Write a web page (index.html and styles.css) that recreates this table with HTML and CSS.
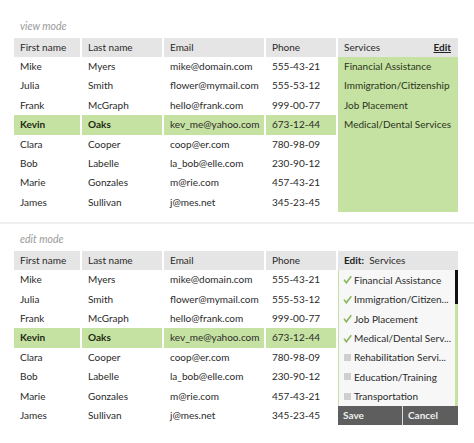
FILE: index.html
```html
<!DOCTYPE html>
<html>
<head>
<meta charset="utf-8">
<link rel="stylesheet" href="styles.css">
</head>
<body>
<div class="page">
  <section class="mode">
    <div class="mode-label">view mode</div>
    <div class="board">
      <div class="grid">
        <div class="row head"><div>First name</div><div>Last name</div><div>Email</div><div>Phone</div></div>
        <div class="row"><div>Mike</div><div>Myers</div><div>mike@domain.com</div><div>555-43-21</div></div>
        <div class="row"><div>Julia</div><div>Smith</div><div>flower@mymail.com</div><div>555-53-12</div></div>
        <div class="row"><div>Frank</div><div>McGraph</div><div>hello@frank.com</div><div>999-00-77</div></div>
        <div class="row sel"><div class="b">Kevin</div><div class="b">Oaks</div><div>kev_me@yahoo.com</div><div>673-12-44</div></div>
        <div class="row"><div>Clara</div><div>Cooper</div><div>coop@er.com</div><div>780-98-09</div></div>
        <div class="row"><div>Bob</div><div>Labelle</div><div>la_bob@elle.com</div><div>230-90-12</div></div>
        <div class="row"><div>Marie</div><div>Gonzales</div><div>m@rie.com</div><div>457-43-21</div></div>
        <div class="row"><div>James</div><div>Sullivan</div><div>j@mes.net</div><div>345-23-45</div></div>
      </div>
      <div class="services">
        <div class="svc-head"><span>Services</span><a class="edit-link">Edit</a></div>
        <div class="svc-view">
          <div class="svc-item">Financial Assistance</div>
          <div class="svc-item">Immigration/Citizenship</div>
          <div class="svc-item">Job Placement</div>
          <div class="svc-item">Medical/Dental Services</div>
        </div>
      </div>
    </div>
  </section>
  <div class="divider"></div>
  <section class="mode">
    <div class="mode-label">edit mode</div>
    <div class="board">
      <div class="grid">
        <div class="row head"><div>First name</div><div>Last name</div><div>Email</div><div>Phone</div></div>
        <div class="row"><div>Mike</div><div>Myers</div><div>mike@domain.com</div><div>555-43-21</div></div>
        <div class="row"><div>Julia</div><div>Smith</div><div>flower@mymail.com</div><div>555-53-12</div></div>
        <div class="row"><div>Frank</div><div>McGraph</div><div>hello@frank.com</div><div>999-00-77</div></div>
        <div class="row sel"><div class="b">Kevin</div><div class="b">Oaks</div><div>kev_me@yahoo.com</div><div>673-12-44</div></div>
        <div class="row"><div>Clara</div><div>Cooper</div><div>coop@er.com</div><div>780-98-09</div></div>
        <div class="row"><div>Bob</div><div>Labelle</div><div>la_bob@elle.com</div><div>230-90-12</div></div>
        <div class="row"><div>Marie</div><div>Gonzales</div><div>m@rie.com</div><div>457-43-21</div></div>
        <div class="row"><div>James</div><div>Sullivan</div><div>j@mes.net</div><div>345-23-45</div></div>
      </div>
      <div class="services">
        <div class="svc-head"><span><b>Edit:</b>&nbsp; Services</span></div>
        <div class="svc-edit">
          <div class="opt"><svg class="tick" viewBox="0 0 9 9" width="9" height="9"><path d="M1 4.6 L3.3 7.8 L8.3 1.2" fill="none" stroke="#86b85a" stroke-width="1.6"/></svg><span>Financial Assistance</span></div>
          <div class="opt"><svg class="tick" viewBox="0 0 9 9" width="9" height="9"><path d="M1 4.6 L3.3 7.8 L8.3 1.2" fill="none" stroke="#86b85a" stroke-width="1.6"/></svg><span>Immigration/Citizen...</span></div>
          <div class="opt"><svg class="tick" viewBox="0 0 9 9" width="9" height="9"><path d="M1 4.6 L3.3 7.8 L8.3 1.2" fill="none" stroke="#86b85a" stroke-width="1.6"/></svg><span>Job Placement</span></div>
          <div class="opt"><svg class="tick" viewBox="0 0 9 9" width="9" height="9"><path d="M1 4.6 L3.3 7.8 L8.3 1.2" fill="none" stroke="#86b85a" stroke-width="1.6"/></svg><span>Medical/Dental Serv...</span></div>
          <div class="opt"><i class="box"></i><span>Rehabilitation Servi...</span></div>
          <div class="opt"><i class="box"></i><span>Education/Training</span></div>
          <div class="opt"><i class="box"></i><span>Transportation</span></div>
          <div class="thumb"></div>
        </div>
        <div class="actions"><div class="btn">Save</div><div class="btn">Cancel</div></div>
      </div>
    </div>
  </section>
</div>
</body>
</html>
```
FILE: styles.css
```css
html, body {
  margin: 0;
  padding: 0;
  background: #fff;
}
body {
  font-family: Lato, "Open Sans", sans-serif;
  font-size: 10px;
  color: #2a2a2a;
}
.page {
  padding-top: 19px;
}
.mode-label {
  padding-left: 20px;
  height: 14px;
  line-height: 14px;
  font-size: 10.5px;
  font-style: italic;
  color: #9a9a9a;
  margin-bottom: 5px;
}
.board {
  display: flex;
  gap: 2px;
  padding-left: 14px;
  align-items: flex-start;
}
.grid {
  display: flex;
  flex-direction: column;
  width: 322px;
}
.row {
  display: grid;
  grid-template-columns: 66px 80px 100px 70px;
  column-gap: 2px;
  height: 19.4px;
  line-height: 19.4px;
}
.row > div {
  padding-left: 6px;
  white-space: nowrap;
  overflow: hidden;
}
.row.head {
  height: 19px;
  line-height: 19px;
}
.row.head > div {
  background: #e5e5e5;
}
.row.sel > div {
  background: #c6e2a2;
}
.b {
  font-weight: bold;
  color: #1f2a14;
}
.services {
  width: 120px;
  display: flex;
  flex-direction: column;
}
.svc-head {
  height: 19px;
  line-height: 19px;
  background: #e5e5e5;
  padding: 0 7px 0 6px;
  display: flex;
  justify-content: space-between;
}
.svc-head b {
  color: #222;
}
.edit-link {
  font-weight: bold;
  text-decoration: underline;
  color: #222;
}
.svc-view {
  background: #c6e2a2;
  height: 155.2px;
}
.svc-item {
  height: 19.4px;
  line-height: 19.4px;
  padding-left: 6px;
  color: #2a3320;
  white-space: nowrap;
}
.svc-edit {
  position: relative;
  background: #f7f7f7;
  border-left: 1px solid #c6e2a2;
  border-right: 3px solid #c6e2a2;
  height: 135.8px;
}
.opt {
  height: 19.4px;
  display: flex;
  align-items: center;
  padding-left: 4px;
  white-space: nowrap;
  overflow: hidden;
}
.tick {
  width: 9px;
  height: 9px;
  margin-right: 2px;
  flex: none;
}
.box {
  display: block;
  width: 7px;
  height: 7px;
  background: #cfcfcf;
  margin: 0 3px 0 1px;
  flex: none;
}
.thumb {
  position: absolute;
  right: -3px;
  top: 0;
  width: 3px;
  height: 34px;
  background: #111;
}
.actions {
  display: flex;
  gap: 1px;
  background: #ddd;
}
.btn {
  height: 19.4px;
  line-height: 19.4px;
  background: #5e5e5e;
  color: #eee;
  font-weight: bold;
  padding-left: 5px;
}
.btn:first-child {
  width: 59px;
}
.btn:last-child {
  flex: 1;
}
.divider {
  height: 2px;
  background: #f0f0f0;
  margin: 10px 0 8px;
}
```
